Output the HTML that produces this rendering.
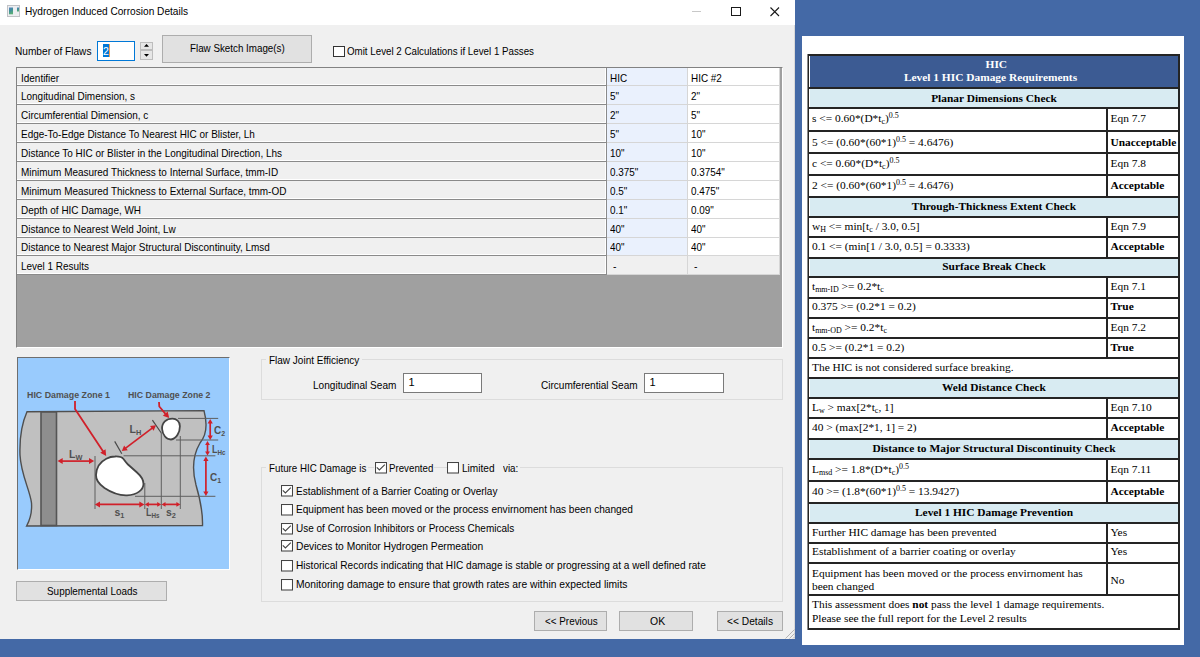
<!DOCTYPE html>
<html><head><meta charset="utf-8"><style>
html,body{margin:0;padding:0;width:1200px;height:657px;overflow:hidden;background:#4469a6;}
div{position:absolute;}
.t{white-space:nowrap;}
sub{font-size:70%;vertical-align:-0.25em;line-height:0}
sup{font-size:70%;vertical-align:0.45em;line-height:0}
</style></head><body>
<div style="left:0px;top:0px;width:795px;height:639px;background:#f0f0f0"></div><div style="left:0px;top:0px;width:795px;height:25px;background:#fff"></div><div style="left:794px;top:25px;width:1px;height:614px;background:#d9d9d9"></div><svg style="position:absolute;left:7px;top:5px" width="13" height="12"><defs><linearGradient id="ig" x1="0" y1="0" x2="0.3" y2="1"><stop offset="0" stop-color="#5b7fc0"/><stop offset="0.5" stop-color="#3f8f9a"/><stop offset="1" stop-color="#5aae78"/></linearGradient></defs><rect x="0.5" y="0.5" width="12" height="11" fill="#eceef0" stroke="#c0c2c6"/><rect x="2" y="2.5" width="4" height="6.8" fill="url(#ig)"/><rect x="10" y="2.5" width="2" height="4" fill="url(#ig)"/></svg><div style="left:692px;top:11px;width:9px;height:1px;background:#c8c8c8"></div><svg style="position:absolute;left:730px;top:6px" width="12" height="12"><rect x="1.5" y="1.5" width="9" height="8" fill="none" stroke="#1a1a1a" stroke-width="1"/></svg><svg style="position:absolute;left:769px;top:6px" width="12" height="12"><path d="M1.5 1.5 L10 10 M10 1.5 L1.5 10" stroke="#1a1a1a" stroke-width="1.1"/></svg><div style="left:802px;top:36px;width:381.8px;height:609px;background:#fff"></div><div style="left:97px;top:41px;width:38px;height:20px;background:#fff;border:1px solid #0078d7;box-sizing:border-box"></div><div style="left:102.5px;top:43.7px;width:6px;height:13px;background:#0078d7"></div><div style="left:108.5px;top:43.7px;width:1px;height:13px;background:#f0a050"></div><div style="left:140px;top:42px;width:13px;height:8px;background:#e6e6e6;border:1px solid #bdbdbd;box-sizing:border-box"></div><div style="left:140px;top:50.2px;width:13px;height:9.6px;background:#e6e6e6;border:1px solid #bdbdbd;box-sizing:border-box"></div><svg style="position:absolute;left:140px;top:42px" width="13" height="18"><path d="M4 4.8 L9 4.8 L6.5 2.1Z M4 12 L9 12 L6.5 14.7Z" fill="#000"/></svg><div style="left:162px;top:35px;width:150px;height:27.5px;background:#e1e1e1;border:1px solid #adadad;box-sizing:border-box"></div><div style="left:333px;top:45.5px;width:12px;height:11.5px;background:#fff;border:1px solid #333;box-sizing:border-box"></div><div style="left:16px;top:67.3px;width:767px;height:280.5px;background:#a0a0a0;border-left:1px solid #828282;border-top:1px solid #828282;border-right:1px solid #fff;border-bottom:1px solid #fff;box-sizing:border-box"></div><div style="left:17px;top:67.6px;width:589.5px;height:18.88px;background:#f0f0f0;border-right:1px solid #8a8a8a;border-bottom:1px solid #8a8a8a;box-sizing:border-box;box-shadow:inset -1px -1px 0 #fff"></div><div style="left:606.5px;top:67.6px;width:81.5px;height:18.88px;background:#eaf1fd;border-right:1px solid #d6d6d6;border-bottom:1px solid #d6d6d6;box-sizing:border-box"></div><div style="left:688px;top:67.6px;width:92px;height:18.88px;background:#fff;border-right:1px solid #d6d6d6;border-bottom:1px solid #d6d6d6;box-sizing:border-box"></div><div style="left:17px;top:86.47999999999999px;width:589.5px;height:18.88px;background:#f0f0f0;border-right:1px solid #8a8a8a;border-bottom:1px solid #8a8a8a;box-sizing:border-box;box-shadow:inset -1px -1px 0 #fff"></div><div style="left:606.5px;top:86.47999999999999px;width:81.5px;height:18.88px;background:#eaf1fd;border-right:1px solid #d6d6d6;border-bottom:1px solid #d6d6d6;box-sizing:border-box"></div><div style="left:688px;top:86.47999999999999px;width:92px;height:18.88px;background:#fff;border-right:1px solid #d6d6d6;border-bottom:1px solid #d6d6d6;box-sizing:border-box"></div><div style="left:17px;top:105.35999999999999px;width:589.5px;height:18.88px;background:#f0f0f0;border-right:1px solid #8a8a8a;border-bottom:1px solid #8a8a8a;box-sizing:border-box;box-shadow:inset -1px -1px 0 #fff"></div><div style="left:606.5px;top:105.35999999999999px;width:81.5px;height:18.88px;background:#eaf1fd;border-right:1px solid #d6d6d6;border-bottom:1px solid #d6d6d6;box-sizing:border-box"></div><div style="left:688px;top:105.35999999999999px;width:92px;height:18.88px;background:#fff;border-right:1px solid #d6d6d6;border-bottom:1px solid #d6d6d6;box-sizing:border-box"></div><div style="left:17px;top:124.24px;width:589.5px;height:18.88px;background:#f0f0f0;border-right:1px solid #8a8a8a;border-bottom:1px solid #8a8a8a;box-sizing:border-box;box-shadow:inset -1px -1px 0 #fff"></div><div style="left:606.5px;top:124.24px;width:81.5px;height:18.88px;background:#eaf1fd;border-right:1px solid #d6d6d6;border-bottom:1px solid #d6d6d6;box-sizing:border-box"></div><div style="left:688px;top:124.24px;width:92px;height:18.88px;background:#fff;border-right:1px solid #d6d6d6;border-bottom:1px solid #d6d6d6;box-sizing:border-box"></div><div style="left:17px;top:143.12px;width:589.5px;height:18.88px;background:#f0f0f0;border-right:1px solid #8a8a8a;border-bottom:1px solid #8a8a8a;box-sizing:border-box;box-shadow:inset -1px -1px 0 #fff"></div><div style="left:606.5px;top:143.12px;width:81.5px;height:18.88px;background:#eaf1fd;border-right:1px solid #d6d6d6;border-bottom:1px solid #d6d6d6;box-sizing:border-box"></div><div style="left:688px;top:143.12px;width:92px;height:18.88px;background:#fff;border-right:1px solid #d6d6d6;border-bottom:1px solid #d6d6d6;box-sizing:border-box"></div><div style="left:17px;top:162.0px;width:589.5px;height:18.88px;background:#f0f0f0;border-right:1px solid #8a8a8a;border-bottom:1px solid #8a8a8a;box-sizing:border-box;box-shadow:inset -1px -1px 0 #fff"></div><div style="left:606.5px;top:162.0px;width:81.5px;height:18.88px;background:#eaf1fd;border-right:1px solid #d6d6d6;border-bottom:1px solid #d6d6d6;box-sizing:border-box"></div><div style="left:688px;top:162.0px;width:92px;height:18.88px;background:#fff;border-right:1px solid #d6d6d6;border-bottom:1px solid #d6d6d6;box-sizing:border-box"></div><div style="left:17px;top:180.88px;width:589.5px;height:18.88px;background:#f0f0f0;border-right:1px solid #8a8a8a;border-bottom:1px solid #8a8a8a;box-sizing:border-box;box-shadow:inset -1px -1px 0 #fff"></div><div style="left:606.5px;top:180.88px;width:81.5px;height:18.88px;background:#eaf1fd;border-right:1px solid #d6d6d6;border-bottom:1px solid #d6d6d6;box-sizing:border-box"></div><div style="left:688px;top:180.88px;width:92px;height:18.88px;background:#fff;border-right:1px solid #d6d6d6;border-bottom:1px solid #d6d6d6;box-sizing:border-box"></div><div style="left:17px;top:199.76px;width:589.5px;height:18.88px;background:#f0f0f0;border-right:1px solid #8a8a8a;border-bottom:1px solid #8a8a8a;box-sizing:border-box;box-shadow:inset -1px -1px 0 #fff"></div><div style="left:606.5px;top:199.76px;width:81.5px;height:18.88px;background:#eaf1fd;border-right:1px solid #d6d6d6;border-bottom:1px solid #d6d6d6;box-sizing:border-box"></div><div style="left:688px;top:199.76px;width:92px;height:18.88px;background:#fff;border-right:1px solid #d6d6d6;border-bottom:1px solid #d6d6d6;box-sizing:border-box"></div><div style="left:17px;top:218.64px;width:589.5px;height:18.88px;background:#f0f0f0;border-right:1px solid #8a8a8a;border-bottom:1px solid #8a8a8a;box-sizing:border-box;box-shadow:inset -1px -1px 0 #fff"></div><div style="left:606.5px;top:218.64px;width:81.5px;height:18.88px;background:#eaf1fd;border-right:1px solid #d6d6d6;border-bottom:1px solid #d6d6d6;box-sizing:border-box"></div><div style="left:688px;top:218.64px;width:92px;height:18.88px;background:#fff;border-right:1px solid #d6d6d6;border-bottom:1px solid #d6d6d6;box-sizing:border-box"></div><div style="left:17px;top:237.51999999999998px;width:589.5px;height:18.88px;background:#f0f0f0;border-right:1px solid #8a8a8a;border-bottom:1px solid #8a8a8a;box-sizing:border-box;box-shadow:inset -1px -1px 0 #fff"></div><div style="left:606.5px;top:237.51999999999998px;width:81.5px;height:18.88px;background:#eaf1fd;border-right:1px solid #d6d6d6;border-bottom:1px solid #d6d6d6;box-sizing:border-box"></div><div style="left:688px;top:237.51999999999998px;width:92px;height:18.88px;background:#fff;border-right:1px solid #d6d6d6;border-bottom:1px solid #d6d6d6;box-sizing:border-box"></div><div style="left:17px;top:256.4px;width:589.5px;height:18.88px;background:#f0f0f0;border-right:1px solid #8a8a8a;border-bottom:1px solid #8a8a8a;box-sizing:border-box;box-shadow:inset -1px -1px 0 #fff"></div><div style="left:606.5px;top:256.4px;width:81.5px;height:18.88px;background:#f0f0f0;border-right:1px solid #d6d6d6;border-bottom:1px solid #d6d6d6;box-sizing:border-box"></div><div style="left:688px;top:256.4px;width:92px;height:18.88px;background:#f0f0f0;border-right:1px solid #d6d6d6;border-bottom:1px solid #d6d6d6;box-sizing:border-box"></div><div style="left:16.5px;top:356.5px;width:213.3px;height:213.5px;background:#99cbfd;border-left:1px solid #6e6e6e;border-top:1px solid #6e6e6e;border-right:1px solid #fff;border-bottom:1px solid #fff;box-sizing:border-box"></div><svg style="position:absolute;left:0;top:0" width="240" height="580" viewBox="0 0 240 580">
<path d="M27 411.8 L204 410.6 C207.5 424 206 436 200 443 C193 455 192 470 196 485 C199.5 497 203 510 202.5 525.5 L26.6 526 C31 518 32 510 31.5 503 C30 490 21 475 20 455 C19.5 440 22 423 27 411.8Z" fill="#c0c0c0" stroke="#4f4f4f" stroke-width="1.4"/>
<rect x="41" y="412" width="15.5" height="113.5" fill="#8e8e8e" stroke="#555" stroke-width="1.6"/>
<g stroke="#5f5f5f" stroke-width="1" fill="none">
<path d="M123.5 455.8 H215.4 M135 496.3 H215.4 M178 418.4 H218.2 M176 440 H218.2"/>
<path d="M95 456 V509 M144.8 483 V509 M161.3 433 V509 M180.3 436 V509"/>
<path d="M114.7 441.4 L121.8 453.7 M152.4 420.2 L161.3 433" stroke="#4a4a4a" stroke-width="1.2"/>
</g>
<path d="M115 456.5 C119 456.3 121.8 457 123.5 459 C124.8 460.8 126 462.5 128 464.5 L137 472.5 C141.3 476.3 143.6 480 143.5 484 C143.3 489.8 137.5 494.8 127 495.3 C118 495.6 110.5 492 104.5 488 C98.8 484 95.8 479.8 96 475 C96.3 467.5 100.5 461.7 106.3 458.7 C109.2 457.2 112 456.5 115 456.5Z" fill="#fff" stroke="#444" stroke-width="1.8"/>
<path d="M172.5 418.7 C176.3 418.7 179.9 421.2 179.9 426.2 C179.9 432 176.6 439 171 439.5 C166.3 439.6 162.6 435 162.1 429 C161.7 422.5 166.3 418.7 172.5 418.7Z" fill="#fff" stroke="#444" stroke-width="1.8"/>
<path d="M75 401 L75 409 L103.5 452" stroke="#d0202a" stroke-width="1.8" fill="none"/>
<path d="M106.20 456.00 L100.22 452.77 L105.55 449.23Z" fill="#d0202a"/>
<path d="M159 402 L159.3 406.5 L165.5 413.8" stroke="#d0202a" stroke-width="1.8" fill="none"/>
<path d="M169.20 418.10 L162.85 415.67 L167.68 411.47Z" fill="#d0202a"/>
<path d="M60.62 461.10 L91.08 461.10" stroke="#d0202a" stroke-width="1.7" fill="none"/><path d="M94.20 461.10 L89.00 464.10 L89.00 458.10Z" fill="#d0202a"/><path d="M57.50 461.10 L62.70 464.10 L62.70 458.10Z" fill="#d0202a"/>
<path d="M124.29 449.12 L153.51 427.08" stroke="#d0202a" stroke-width="1.7" fill="none"/><path d="M156.00 425.20 L153.66 430.73 L150.04 425.94Z" fill="#d0202a"/><path d="M121.80 451.00 L127.76 450.26 L124.14 445.47Z" fill="#d0202a"/>
<path d="M97.92 504.40 L141.38 504.40" stroke="#d0202a" stroke-width="1.7" fill="none"/><path d="M144.50 504.40 L139.30 507.40 L139.30 501.40Z" fill="#d0202a"/><path d="M94.80 504.40 L100.00 507.40 L100.00 501.40Z" fill="#d0202a"/>
<path d="M147.20 504.40 L158.80 504.40" stroke="#d0202a" stroke-width="1.7" fill="none"/><path d="M161.20 504.40 L157.20 506.80 L157.20 502.00Z" fill="#d0202a"/><path d="M144.80 504.40 L148.80 506.80 L148.80 502.00Z" fill="#d0202a"/>
<path d="M163.90 504.40 L178.00 504.40" stroke="#d0202a" stroke-width="1.7" fill="none"/><path d="M180.40 504.40 L176.40 506.80 L176.40 502.00Z" fill="#d0202a"/><path d="M161.50 504.40 L165.50 506.80 L165.50 502.00Z" fill="#d0202a"/>
<path d="M210.20 421.70 L210.20 437.30" stroke="#d0202a" stroke-width="1.7" fill="none"/><path d="M210.20 440.00 L207.60 435.50 L212.80 435.50Z" fill="#d0202a"/><path d="M210.20 419.00 L207.60 423.50 L212.80 423.50Z" fill="#d0202a"/>
<path d="M207.50 443.40 L207.50 453.10" stroke="#d0202a" stroke-width="1.7" fill="none"/><path d="M207.50 455.50 L205.10 451.50 L209.90 451.50Z" fill="#d0202a"/><path d="M207.50 441.00 L205.10 445.00 L209.90 445.00Z" fill="#d0202a"/>
<path d="M205.90 459.20 L205.90 493.30" stroke="#d0202a" stroke-width="1.7" fill="none"/><path d="M205.90 496.00 L203.30 491.50 L208.50 491.50Z" fill="#d0202a"/><path d="M205.90 456.50 L203.30 461.00 L208.50 461.00Z" fill="#d0202a"/>
</svg><div style="left:16.4px;top:581px;width:151px;height:19.7px;background:#e1e1e1;border:1px solid #adadad;box-sizing:border-box"></div><div style="left:261.4px;top:359.3px;width:522px;height:40.3px;border:1px solid #dcdcdc;box-sizing:border-box"></div><div style="left:266px;top:354px;width:96px;height:10px;background:#f0f0f0"></div><div style="left:403px;top:373.3px;width:79.3px;height:19.4px;background:#fff;border:1px solid #7a7a7a;box-sizing:border-box"></div><div style="left:644.3px;top:373.3px;width:79.3px;height:19.4px;background:#fff;border:1px solid #7a7a7a;box-sizing:border-box"></div><div style="left:261.4px;top:467.3px;width:522px;height:135.2px;border:1px solid #dcdcdc;box-sizing:border-box"></div><div style="left:266px;top:460px;width:101.5px;height:12px;background:#f0f0f0"></div><div style="left:373.8px;top:460px;width:60.5px;height:12px;background:#f0f0f0"></div><div style="left:446.5px;top:460px;width:56px;height:12px;background:#f0f0f0"></div><div style="left:501.5px;top:460px;width:18px;height:12px;background:#f0f0f0"></div><svg style="position:absolute;left:374.5px;top:462px" width="12" height="12"><rect x="0.5" y="0.5" width="11" height="10.5" fill="#fff" stroke="#444" stroke-width="1.05"/><path d="M1.8 5.3 L4.4 8 L9.8 2.6" stroke="#444" stroke-width="1.1" fill="none"/></svg><svg style="position:absolute;left:447px;top:462px" width="12" height="12"><rect x="0.5" y="0.5" width="11" height="10.5" fill="#fff" stroke="#444" stroke-width="1.05"/></svg><svg style="position:absolute;left:281px;top:485.2px" width="12" height="12"><rect x="0.5" y="0.5" width="11" height="10.5" fill="#fff" stroke="#444" stroke-width="1.05"/><path d="M1.8 5.3 L4.4 8 L9.8 2.6" stroke="#444" stroke-width="1.1" fill="none"/></svg><svg style="position:absolute;left:281px;top:503.7px" width="12" height="12"><rect x="0.5" y="0.5" width="11" height="10.5" fill="#fff" stroke="#444" stroke-width="1.05"/></svg><svg style="position:absolute;left:281px;top:523.0px" width="12" height="12"><rect x="0.5" y="0.5" width="11" height="10.5" fill="#fff" stroke="#444" stroke-width="1.05"/><path d="M1.8 5.3 L4.4 8 L9.8 2.6" stroke="#444" stroke-width="1.1" fill="none"/></svg><svg style="position:absolute;left:281px;top:540.2px" width="12" height="12"><rect x="0.5" y="0.5" width="11" height="10.5" fill="#fff" stroke="#444" stroke-width="1.05"/><path d="M1.8 5.3 L4.4 8 L9.8 2.6" stroke="#444" stroke-width="1.1" fill="none"/></svg><svg style="position:absolute;left:281px;top:559.7px" width="12" height="12"><rect x="0.5" y="0.5" width="11" height="10.5" fill="#fff" stroke="#444" stroke-width="1.05"/></svg><svg style="position:absolute;left:281px;top:578.7px" width="12" height="12"><rect x="0.5" y="0.5" width="11" height="10.5" fill="#fff" stroke="#444" stroke-width="1.05"/></svg><div style="left:534px;top:611.2px;width:72.7px;height:19.4px;background:#e1e1e1;border:1px solid #adadad;box-sizing:border-box"></div><div style="left:619px;top:611.2px;width:73.6px;height:19.4px;background:#e1e1e1;border:1px solid #adadad;box-sizing:border-box"></div><div style="left:717px;top:611.2px;width:65.6px;height:19.4px;background:#e1e1e1;border:1px solid #adadad;box-sizing:border-box"></div><svg style="position:absolute;left:782px;top:626px" width="13" height="13"><path d="M12.5 3.5 L3.5 12.5 M12.5 7.5 L7.5 12.5 M12.5 11 L11 12.5" stroke="#b4b4b4" stroke-width="1"/></svg><div style="left:810px;top:56px;width:368px;height:31px;background:#3c5b93"></div><div style="left:810px;top:89px;width:368px;height:17.5px;background:#d8ebf2"></div><div style="left:810px;top:108.5px;width:368px;height:21.5px;background:#fff"></div><div style="left:810px;top:132px;width:368px;height:19.5px;background:#fff"></div><div style="left:810px;top:153.5px;width:368px;height:20.0px;background:#fff"></div><div style="left:810px;top:175.5px;width:368px;height:20.5px;background:#fff"></div><div style="left:810px;top:198px;width:368px;height:18px;background:#d8ebf2"></div><div style="left:810px;top:218px;width:368px;height:18.30000000000001px;background:#fff"></div><div style="left:810px;top:238.3px;width:368px;height:18.30000000000001px;background:#fff"></div><div style="left:810px;top:258.6px;width:368px;height:17.399999999999977px;background:#d8ebf2"></div><div style="left:810px;top:278px;width:368px;height:18.600000000000023px;background:#fff"></div><div style="left:810px;top:298.6px;width:368px;height:18.19999999999999px;background:#fff"></div><div style="left:810px;top:318.8px;width:368px;height:18.0px;background:#fff"></div><div style="left:810px;top:338.8px;width:368px;height:18.599999999999966px;background:#fff"></div><div style="left:810px;top:359.4px;width:368px;height:17.80000000000001px;background:#fff"></div><div style="left:810px;top:379.2px;width:368px;height:17.80000000000001px;background:#d8ebf2"></div><div style="left:810px;top:399px;width:368px;height:18.19999999999999px;background:#fff"></div><div style="left:810px;top:419.2px;width:368px;height:18.600000000000023px;background:#fff"></div><div style="left:810px;top:439.8px;width:368px;height:18.0px;background:#d8ebf2"></div><div style="left:810px;top:459.8px;width:368px;height:20.0px;background:#fff"></div><div style="left:810px;top:481.8px;width:368px;height:20.399999999999977px;background:#fff"></div><div style="left:810px;top:504.2px;width:368px;height:17.69999999999999px;background:#d8ebf2"></div><div style="left:810px;top:523.9px;width:368px;height:17.700000000000045px;background:#fff"></div><div style="left:810px;top:543.6px;width:368px;height:18.399999999999977px;background:#fff"></div><div style="left:810px;top:564px;width:368px;height:30.200000000000045px;background:#fff"></div><div style="left:810px;top:596.2px;width:368px;height:31.399999999999977px;background:#fff"></div><div style="left:808px;top:54px;width:372px;height:2px;background:#242424"></div><div style="left:808px;top:87px;width:372px;height:2px;background:#242424"></div><div style="left:808px;top:106.5px;width:372px;height:2px;background:#242424"></div><div style="left:808px;top:130px;width:372px;height:2px;background:#242424"></div><div style="left:808px;top:151.5px;width:372px;height:2px;background:#242424"></div><div style="left:808px;top:173.5px;width:372px;height:2px;background:#242424"></div><div style="left:808px;top:196px;width:372px;height:2px;background:#242424"></div><div style="left:808px;top:216px;width:372px;height:2px;background:#242424"></div><div style="left:808px;top:236.3px;width:372px;height:2px;background:#242424"></div><div style="left:808px;top:256.6px;width:372px;height:2px;background:#242424"></div><div style="left:808px;top:276px;width:372px;height:2px;background:#242424"></div><div style="left:808px;top:296.6px;width:372px;height:2px;background:#242424"></div><div style="left:808px;top:316.8px;width:372px;height:2px;background:#242424"></div><div style="left:808px;top:336.8px;width:372px;height:2px;background:#242424"></div><div style="left:808px;top:357.4px;width:372px;height:2px;background:#242424"></div><div style="left:808px;top:377.2px;width:372px;height:2px;background:#242424"></div><div style="left:808px;top:397px;width:372px;height:2px;background:#242424"></div><div style="left:808px;top:417.2px;width:372px;height:2px;background:#242424"></div><div style="left:808px;top:437.8px;width:372px;height:2px;background:#242424"></div><div style="left:808px;top:457.8px;width:372px;height:2px;background:#242424"></div><div style="left:808px;top:479.8px;width:372px;height:2px;background:#242424"></div><div style="left:808px;top:502.2px;width:372px;height:2px;background:#242424"></div><div style="left:808px;top:521.9px;width:372px;height:2px;background:#242424"></div><div style="left:808px;top:541.6px;width:372px;height:2px;background:#242424"></div><div style="left:808px;top:562px;width:372px;height:2px;background:#242424"></div><div style="left:808px;top:594.2px;width:372px;height:2px;background:#242424"></div><div style="left:808px;top:627.6px;width:372px;height:2px;background:#242424"></div><div style="left:807px;top:54px;width:1px;height:575.6px;background:#8a8a8a"></div><div style="left:808px;top:54px;width:1px;height:575.6px;background:#242424"></div><div style="left:1178px;top:54px;width:2px;height:575.6px;background:#242424"></div><div style="left:1106px;top:108.5px;width:2px;height:21.5px;background:#242424"></div><div style="left:1106px;top:132px;width:2px;height:19.5px;background:#242424"></div><div style="left:1106px;top:153.5px;width:2px;height:20.0px;background:#242424"></div><div style="left:1106px;top:175.5px;width:2px;height:20.5px;background:#242424"></div><div style="left:1106px;top:218px;width:2px;height:18.30000000000001px;background:#242424"></div><div style="left:1106px;top:238.3px;width:2px;height:18.30000000000001px;background:#242424"></div><div style="left:1106px;top:278px;width:2px;height:18.600000000000023px;background:#242424"></div><div style="left:1106px;top:298.6px;width:2px;height:18.19999999999999px;background:#242424"></div><div style="left:1106px;top:318.8px;width:2px;height:18.0px;background:#242424"></div><div style="left:1106px;top:338.8px;width:2px;height:18.599999999999966px;background:#242424"></div><div style="left:1106px;top:399px;width:2px;height:18.19999999999999px;background:#242424"></div><div style="left:1106px;top:419.2px;width:2px;height:18.600000000000023px;background:#242424"></div><div style="left:1106px;top:459.8px;width:2px;height:20.0px;background:#242424"></div><div style="left:1106px;top:481.8px;width:2px;height:20.399999999999977px;background:#242424"></div><div style="left:1106px;top:523.9px;width:2px;height:17.700000000000045px;background:#242424"></div><div style="left:1106px;top:543.6px;width:2px;height:18.399999999999977px;background:#242424"></div><div style="left:1106px;top:564px;width:2px;height:30.200000000000045px;background:#242424"></div>
<div class="t" style="left:25.00px;top:5.00px;font-family:'Liberation Sans',sans-serif;font-size:11px;line-height:12px;color:#000;transform:scaleX(0.9192);transform-origin:0 0;">Hydrogen Induced Corrosion Details</div><div class="t" style="left:15.00px;top:44.50px;font-family:'Liberation Sans',sans-serif;font-size:11px;line-height:12px;color:#000;transform:scaleX(0.9201);transform-origin:0 0;">Number of Flaws</div><div class="t" style="left:103.00px;top:45.00px;font-family:'Liberation Sans',sans-serif;font-size:11px;line-height:12px;color:#fff;transform:scaleX(0.9500);transform-origin:0 0;">2</div><div class="t" style="left:189.80px;top:41.70px;font-family:'Liberation Sans',sans-serif;font-size:11px;line-height:12px;color:#000;transform:scaleX(0.8902);transform-origin:0 0;">Flaw Sketch Image(s)</div><div class="t" style="left:347.00px;top:45.00px;font-family:'Liberation Sans',sans-serif;font-size:11px;line-height:12px;color:#000;transform:scaleX(0.8865);transform-origin:0 0;">Omit Level 2 Calculations if Level 1 Passes</div><div class="t" style="left:21.00px;top:71.50px;font-family:'Liberation Sans',sans-serif;font-size:11px;line-height:12px;color:#000;transform:scaleX(0.9050);transform-origin:0 0;">Identifier</div><div class="t" style="left:610.00px;top:71.50px;font-family:'Liberation Sans',sans-serif;font-size:11px;line-height:12px;color:#000;transform:scaleX(0.9000);transform-origin:0 0;">HIC</div><div class="t" style="left:691.00px;top:71.50px;font-family:'Liberation Sans',sans-serif;font-size:11px;line-height:12px;color:#000;transform:scaleX(0.9000);transform-origin:0 0;">HIC #2</div><div class="t" style="left:21.00px;top:90.38px;font-family:'Liberation Sans',sans-serif;font-size:11px;line-height:12px;color:#000;transform:scaleX(0.9050);transform-origin:0 0;">Longitudinal Dimension, s</div><div class="t" style="left:610.00px;top:90.38px;font-family:'Liberation Sans',sans-serif;font-size:11px;line-height:12px;color:#000;transform:scaleX(0.9000);transform-origin:0 0;">5&quot;</div><div class="t" style="left:691.00px;top:90.38px;font-family:'Liberation Sans',sans-serif;font-size:11px;line-height:12px;color:#000;transform:scaleX(0.9000);transform-origin:0 0;">2&quot;</div><div class="t" style="left:21.00px;top:109.26px;font-family:'Liberation Sans',sans-serif;font-size:11px;line-height:12px;color:#000;transform:scaleX(0.9050);transform-origin:0 0;">Circumferential Dimension, c</div><div class="t" style="left:610.00px;top:109.26px;font-family:'Liberation Sans',sans-serif;font-size:11px;line-height:12px;color:#000;transform:scaleX(0.9000);transform-origin:0 0;">2&quot;</div><div class="t" style="left:691.00px;top:109.26px;font-family:'Liberation Sans',sans-serif;font-size:11px;line-height:12px;color:#000;transform:scaleX(0.9000);transform-origin:0 0;">5&quot;</div><div class="t" style="left:21.00px;top:128.14px;font-family:'Liberation Sans',sans-serif;font-size:11px;line-height:12px;color:#000;transform:scaleX(0.9050);transform-origin:0 0;">Edge-To-Edge Distance To Nearest HIC or Blister, Lh</div><div class="t" style="left:610.00px;top:128.14px;font-family:'Liberation Sans',sans-serif;font-size:11px;line-height:12px;color:#000;transform:scaleX(0.9000);transform-origin:0 0;">5&quot;</div><div class="t" style="left:691.00px;top:128.14px;font-family:'Liberation Sans',sans-serif;font-size:11px;line-height:12px;color:#000;transform:scaleX(0.9000);transform-origin:0 0;">10&quot;</div><div class="t" style="left:21.00px;top:147.02px;font-family:'Liberation Sans',sans-serif;font-size:11px;line-height:12px;color:#000;transform:scaleX(0.9050);transform-origin:0 0;">Distance To HIC or Blister in the Longitudinal Direction, Lhs</div><div class="t" style="left:610.00px;top:147.02px;font-family:'Liberation Sans',sans-serif;font-size:11px;line-height:12px;color:#000;transform:scaleX(0.9000);transform-origin:0 0;">10&quot;</div><div class="t" style="left:691.00px;top:147.02px;font-family:'Liberation Sans',sans-serif;font-size:11px;line-height:12px;color:#000;transform:scaleX(0.9000);transform-origin:0 0;">10&quot;</div><div class="t" style="left:21.00px;top:165.90px;font-family:'Liberation Sans',sans-serif;font-size:11px;line-height:12px;color:#000;transform:scaleX(0.9050);transform-origin:0 0;">Minimum Measured Thickness to Internal Surface, tmm-ID</div><div class="t" style="left:610.00px;top:165.90px;font-family:'Liberation Sans',sans-serif;font-size:11px;line-height:12px;color:#000;transform:scaleX(0.9000);transform-origin:0 0;">0.375&quot;</div><div class="t" style="left:691.00px;top:165.90px;font-family:'Liberation Sans',sans-serif;font-size:11px;line-height:12px;color:#000;transform:scaleX(0.9000);transform-origin:0 0;">0.3754&quot;</div><div class="t" style="left:21.00px;top:184.78px;font-family:'Liberation Sans',sans-serif;font-size:11px;line-height:12px;color:#000;transform:scaleX(0.9050);transform-origin:0 0;">Minimum Measured Thickness to External Surface, tmm-OD</div><div class="t" style="left:610.00px;top:184.78px;font-family:'Liberation Sans',sans-serif;font-size:11px;line-height:12px;color:#000;transform:scaleX(0.9000);transform-origin:0 0;">0.5&quot;</div><div class="t" style="left:691.00px;top:184.78px;font-family:'Liberation Sans',sans-serif;font-size:11px;line-height:12px;color:#000;transform:scaleX(0.9000);transform-origin:0 0;">0.475&quot;</div><div class="t" style="left:21.00px;top:203.66px;font-family:'Liberation Sans',sans-serif;font-size:11px;line-height:12px;color:#000;transform:scaleX(0.9050);transform-origin:0 0;">Depth of HIC Damage, WH</div><div class="t" style="left:610.00px;top:203.66px;font-family:'Liberation Sans',sans-serif;font-size:11px;line-height:12px;color:#000;transform:scaleX(0.9000);transform-origin:0 0;">0.1&quot;</div><div class="t" style="left:691.00px;top:203.66px;font-family:'Liberation Sans',sans-serif;font-size:11px;line-height:12px;color:#000;transform:scaleX(0.9000);transform-origin:0 0;">0.09&quot;</div><div class="t" style="left:21.00px;top:222.54px;font-family:'Liberation Sans',sans-serif;font-size:11px;line-height:12px;color:#000;transform:scaleX(0.9050);transform-origin:0 0;">Distance to Nearest Weld Joint, Lw</div><div class="t" style="left:610.00px;top:222.54px;font-family:'Liberation Sans',sans-serif;font-size:11px;line-height:12px;color:#000;transform:scaleX(0.9000);transform-origin:0 0;">40&quot;</div><div class="t" style="left:691.00px;top:222.54px;font-family:'Liberation Sans',sans-serif;font-size:11px;line-height:12px;color:#000;transform:scaleX(0.9000);transform-origin:0 0;">40&quot;</div><div class="t" style="left:21.00px;top:241.42px;font-family:'Liberation Sans',sans-serif;font-size:11px;line-height:12px;color:#000;transform:scaleX(0.9050);transform-origin:0 0;">Distance to Nearest Major Structural Discontinuity, Lmsd</div><div class="t" style="left:610.00px;top:241.42px;font-family:'Liberation Sans',sans-serif;font-size:11px;line-height:12px;color:#000;transform:scaleX(0.9000);transform-origin:0 0;">40&quot;</div><div class="t" style="left:691.00px;top:241.42px;font-family:'Liberation Sans',sans-serif;font-size:11px;line-height:12px;color:#000;transform:scaleX(0.9000);transform-origin:0 0;">40&quot;</div><div class="t" style="left:21.00px;top:260.30px;font-family:'Liberation Sans',sans-serif;font-size:11px;line-height:12px;color:#000;transform:scaleX(0.9050);transform-origin:0 0;">Level 1 Results</div><div class="t" style="left:613.00px;top:260.30px;font-family:'Liberation Sans',sans-serif;font-size:11px;line-height:12px;color:#000;transform:scaleX(0.9500);transform-origin:0 0;">-</div><div class="t" style="left:694.00px;top:260.30px;font-family:'Liberation Sans',sans-serif;font-size:11px;line-height:12px;color:#000;transform:scaleX(0.9500);transform-origin:0 0;">-</div><div class="t" style="left:26.60px;top:390.00px;font-family:'Liberation Sans',sans-serif;font-size:9px;line-height:10px;color:#505050;font-weight:bold;transform:scaleX(0.9819);transform-origin:0 0;">HIC Damage Zone 1</div><div class="t" style="left:128.20px;top:390.00px;font-family:'Liberation Sans',sans-serif;font-size:9px;line-height:10px;color:#505050;font-weight:bold;transform:scaleX(0.9760);transform-origin:0 0;">HIC Damage Zone 2</div><div class="t" style="left:69.00px;top:448.50px;font-family:'Liberation Sans',sans-serif;font-size:10.5px;line-height:10px;color:#505050;font-weight:bold;">L<sub>W</sub></div><div class="t" style="left:129.60px;top:424.20px;font-family:'Liberation Sans',sans-serif;font-size:10.5px;line-height:10px;color:#505050;font-weight:bold;">L<sub>H</sub></div><div class="t" style="left:213.90px;top:424.90px;font-family:'Liberation Sans',sans-serif;font-size:10.5px;line-height:10px;color:#505050;font-weight:bold;transform:scaleX(0.9500);transform-origin:0 0;">C<sub>2</sub></div><div class="t" style="left:212.30px;top:443.50px;font-family:'Liberation Sans',sans-serif;font-size:10.5px;line-height:10px;color:#505050;font-weight:bold;transform:scaleX(0.8500);transform-origin:0 0;">L<sub>Hc</sub></div><div class="t" style="left:210.10px;top:472.40px;font-family:'Liberation Sans',sans-serif;font-size:10.5px;line-height:10px;color:#505050;font-weight:bold;transform:scaleX(0.9500);transform-origin:0 0;">C<sub>1</sub></div><div class="t" style="left:114.50px;top:507.20px;font-family:'Liberation Sans',sans-serif;font-size:10.5px;line-height:10px;color:#505050;font-weight:bold;">s<sub>1</sub></div><div class="t" style="left:145.50px;top:507.20px;font-family:'Liberation Sans',sans-serif;font-size:10.5px;line-height:10px;color:#505050;font-weight:bold;transform:scaleX(0.8500);transform-origin:0 0;">L<sub>Hs</sub></div><div class="t" style="left:166.00px;top:507.20px;font-family:'Liberation Sans',sans-serif;font-size:10.5px;line-height:10px;color:#505050;font-weight:bold;">s<sub>2</sub></div><div class="t" style="left:46.80px;top:584.80px;font-family:'Liberation Sans',sans-serif;font-size:11px;line-height:12px;color:#000;transform:scaleX(0.9013);transform-origin:0 0;">Supplemental Loads</div><div class="t" style="left:268.70px;top:353.80px;font-family:'Liberation Sans',sans-serif;font-size:11px;line-height:12px;color:#000;transform:scaleX(0.9080);transform-origin:0 0;">Flaw Joint Efficiency</div><div class="t" style="left:312.60px;top:378.60px;font-family:'Liberation Sans',sans-serif;font-size:11px;line-height:12px;color:#000;transform:scaleX(0.9152);transform-origin:0 0;">Longitudinal Seam</div><div class="t" style="left:408.50px;top:376.30px;font-family:'Liberation Sans',sans-serif;font-size:11px;line-height:12px;color:#000;">1</div><div class="t" style="left:540.70px;top:378.60px;font-family:'Liberation Sans',sans-serif;font-size:11px;line-height:12px;color:#000;transform:scaleX(0.9133);transform-origin:0 0;">Circumferential Seam</div><div class="t" style="left:649.50px;top:376.30px;font-family:'Liberation Sans',sans-serif;font-size:11px;line-height:12px;color:#000;">1</div><div class="t" style="left:268.70px;top:461.50px;font-family:'Liberation Sans',sans-serif;font-size:11px;line-height:12px;color:#000;transform:scaleX(0.8891);transform-origin:0 0;">Future HIC Damage is</div><div class="t" style="left:388.70px;top:461.50px;font-family:'Liberation Sans',sans-serif;font-size:11px;line-height:12px;color:#000;transform:scaleX(0.8832);transform-origin:0 0;">Prevented</div><div class="t" style="left:461.70px;top:461.50px;font-family:'Liberation Sans',sans-serif;font-size:11px;line-height:12px;color:#000;transform:scaleX(0.9191);transform-origin:0 0;">Limited</div><div class="t" style="left:502.70px;top:461.50px;font-family:'Liberation Sans',sans-serif;font-size:11px;line-height:12px;color:#000;transform:scaleX(0.8934);transform-origin:0 0;">via:</div><div class="t" style="left:295.60px;top:484.50px;font-family:'Liberation Sans',sans-serif;font-size:11px;line-height:12px;color:#000;transform:scaleX(0.9100);transform-origin:0 0;">Establishment of a Barrier Coating or Overlay</div><div class="t" style="left:295.60px;top:503.00px;font-family:'Liberation Sans',sans-serif;font-size:11px;line-height:12px;color:#000;transform:scaleX(0.9182);transform-origin:0 0;">Equipment has been moved or the process envirnoment has been changed</div><div class="t" style="left:295.60px;top:522.30px;font-family:'Liberation Sans',sans-serif;font-size:11px;line-height:12px;color:#000;transform:scaleX(0.9082);transform-origin:0 0;">Use of Corrosion Inhibitors or Process Chemicals</div><div class="t" style="left:295.60px;top:539.50px;font-family:'Liberation Sans',sans-serif;font-size:11px;line-height:12px;color:#000;transform:scaleX(0.9306);transform-origin:0 0;">Devices to Monitor Hydrogen Permeation</div><div class="t" style="left:295.60px;top:559.00px;font-family:'Liberation Sans',sans-serif;font-size:11px;line-height:12px;color:#000;transform:scaleX(0.9181);transform-origin:0 0;">Historical Records indicating that HIC damage is stable or progressing at a well defined rate</div><div class="t" style="left:295.60px;top:578.00px;font-family:'Liberation Sans',sans-serif;font-size:11px;line-height:12px;color:#000;transform:scaleX(0.9361);transform-origin:0 0;">Monitoring damage to ensure that growth rates are within expected limits</div><div class="t" style="left:544.80px;top:615.00px;font-family:'Liberation Sans',sans-serif;font-size:11px;line-height:12px;color:#000;transform:scaleX(0.8977);transform-origin:0 0;">&lt;&lt; Previous</div><div class="t" style="left:650.00px;top:615.00px;font-family:'Liberation Sans',sans-serif;font-size:11px;line-height:12px;color:#000;transform:scaleX(0.9500);transform-origin:0 0;">OK</div><div class="t" style="left:727.00px;top:615.00px;font-family:'Liberation Sans',sans-serif;font-size:11px;line-height:12px;color:#000;transform:scaleX(0.9287);transform-origin:0 0;">&lt;&lt; Details</div><div class="t" style="left:996.30px;top:58.30px;font-family:'Liberation Serif',serif;font-size:11.4px;line-height:12px;color:#fff;font-weight:bold;transform:translateX(-50%) scaleX(1.0000);transform-origin:50% 0;">HIC</div><div class="t" style="left:990.50px;top:71.20px;font-family:'Liberation Serif',serif;font-size:11.4px;line-height:12px;color:#fff;font-weight:bold;transform:translateX(-50%) scaleX(1.0000);transform-origin:50% 0;">Level 1 HIC Damage Requirements</div><div class="t" style="left:994.00px;top:92.20px;font-family:'Liberation Serif',serif;font-size:11.4px;line-height:12px;color:#000;font-weight:bold;transform:translateX(-50%) scaleX(1.0000);transform-origin:50% 0;">Planar Dimensions Check</div><div class="t" style="left:812.00px;top:112.00px;font-family:'Liberation Serif',serif;font-size:11.4px;line-height:12px;color:#000;">s &lt;= 0.60*(D*t<sub>c</sub>)<sup>0.5</sup></div><div class="t" style="left:1110.50px;top:112.00px;font-family:'Liberation Serif',serif;font-size:11.4px;line-height:12px;color:#000;">Eqn 7.7</div><div class="t" style="left:812.00px;top:135.50px;font-family:'Liberation Serif',serif;font-size:11.4px;line-height:12px;color:#000;">5 &lt;= (0.60*(60*1)<sup>0.5</sup> = 4.6476)</div><div class="t" style="left:1110.50px;top:135.50px;font-family:'Liberation Serif',serif;font-size:11.4px;line-height:12px;color:#000;font-weight:bold;">Unacceptable</div><div class="t" style="left:812.00px;top:157.30px;font-family:'Liberation Serif',serif;font-size:11.4px;line-height:12px;color:#000;">c &lt;= 0.60*(D*t<sub>c</sub>)<sup>0.5</sup></div><div class="t" style="left:1110.50px;top:157.30px;font-family:'Liberation Serif',serif;font-size:11.4px;line-height:12px;color:#000;">Eqn 7.8</div><div class="t" style="left:812.00px;top:179.30px;font-family:'Liberation Serif',serif;font-size:11.4px;line-height:12px;color:#000;">2 &lt;= (0.60*(60*1)<sup>0.5</sup> = 4.6476)</div><div class="t" style="left:1110.50px;top:179.30px;font-family:'Liberation Serif',serif;font-size:11.4px;line-height:12px;color:#000;font-weight:bold;">Acceptable</div><div class="t" style="left:812.00px;top:220.00px;font-family:'Liberation Serif',serif;font-size:11.4px;line-height:12px;color:#000;">w<sub>H</sub> &lt;= min[t<sub>c</sub> / 3.0, 0.5]</div><div class="t" style="left:1110.50px;top:220.00px;font-family:'Liberation Serif',serif;font-size:11.4px;line-height:12px;color:#000;">Eqn 7.9</div><div class="t" style="left:812.00px;top:240.10px;font-family:'Liberation Serif',serif;font-size:11.4px;line-height:12px;color:#000;">0.1 &lt;= (min[1 / 3.0, 0.5] = 0.3333)</div><div class="t" style="left:1110.50px;top:240.10px;font-family:'Liberation Serif',serif;font-size:11.4px;line-height:12px;color:#000;font-weight:bold;">Acceptable</div><div class="t" style="left:812.00px;top:279.80px;font-family:'Liberation Serif',serif;font-size:11.4px;line-height:12px;color:#000;">t<sub>mm-ID</sub> &gt;= 0.2*t<sub>c</sub></div><div class="t" style="left:1110.50px;top:279.80px;font-family:'Liberation Serif',serif;font-size:11.4px;line-height:12px;color:#000;">Eqn 7.1</div><div class="t" style="left:812.00px;top:300.40px;font-family:'Liberation Serif',serif;font-size:11.4px;line-height:12px;color:#000;">0.375 &gt;= (0.2*1 = 0.2)</div><div class="t" style="left:1110.50px;top:300.40px;font-family:'Liberation Serif',serif;font-size:11.4px;line-height:12px;color:#000;font-weight:bold;">True</div><div class="t" style="left:812.00px;top:320.60px;font-family:'Liberation Serif',serif;font-size:11.4px;line-height:12px;color:#000;">t<sub>mm-OD</sub> &gt;= 0.2*t<sub>c</sub></div><div class="t" style="left:1110.50px;top:320.60px;font-family:'Liberation Serif',serif;font-size:11.4px;line-height:12px;color:#000;">Eqn 7.2</div><div class="t" style="left:812.00px;top:340.60px;font-family:'Liberation Serif',serif;font-size:11.4px;line-height:12px;color:#000;">0.5 &gt;= (0.2*1 = 0.2)</div><div class="t" style="left:1110.50px;top:340.60px;font-family:'Liberation Serif',serif;font-size:11.4px;line-height:12px;color:#000;font-weight:bold;">True</div><div class="t" style="left:812.00px;top:400.80px;font-family:'Liberation Serif',serif;font-size:11.4px;line-height:12px;color:#000;">L<sub>w</sub> &gt; max[2*t<sub>c</sub>, 1]</div><div class="t" style="left:1110.50px;top:400.80px;font-family:'Liberation Serif',serif;font-size:11.4px;line-height:12px;color:#000;">Eqn 7.10</div><div class="t" style="left:812.00px;top:421.00px;font-family:'Liberation Serif',serif;font-size:11.4px;line-height:12px;color:#000;">40 &gt; (max[2*1, 1] = 2)</div><div class="t" style="left:1110.50px;top:421.00px;font-family:'Liberation Serif',serif;font-size:11.4px;line-height:12px;color:#000;font-weight:bold;">Acceptable</div><div class="t" style="left:812.00px;top:462.80px;font-family:'Liberation Serif',serif;font-size:11.4px;line-height:12px;color:#000;">L<sub>msd</sub> &gt;= 1.8*(D*t<sub>c</sub>)<sup>0.5</sup></div><div class="t" style="left:1110.50px;top:462.80px;font-family:'Liberation Serif',serif;font-size:11.4px;line-height:12px;color:#000;">Eqn 7.11</div><div class="t" style="left:812.00px;top:484.80px;font-family:'Liberation Serif',serif;font-size:11.4px;line-height:12px;color:#000;">40 &gt;= (1.8*(60*1)<sup>0.5</sup> = 13.9427)</div><div class="t" style="left:1110.50px;top:484.80px;font-family:'Liberation Serif',serif;font-size:11.4px;line-height:12px;color:#000;font-weight:bold;">Acceptable</div><div class="t" style="left:812.00px;top:525.70px;font-family:'Liberation Serif',serif;font-size:11.4px;line-height:12px;color:#000;">Further HIC damage has been prevented</div><div class="t" style="left:1110.50px;top:525.70px;font-family:'Liberation Serif',serif;font-size:11.4px;line-height:12px;color:#000;">Yes</div><div class="t" style="left:812.00px;top:545.40px;font-family:'Liberation Serif',serif;font-size:11.4px;line-height:12px;color:#000;">Establishment of a barrier coating or overlay</div><div class="t" style="left:1110.50px;top:545.40px;font-family:'Liberation Serif',serif;font-size:11.4px;line-height:12px;color:#000;">Yes</div><div class="t" style="left:994.00px;top:199.80px;font-family:'Liberation Serif',serif;font-size:11.4px;line-height:12px;color:#000;font-weight:bold;transform:translateX(-50%) scaleX(1.0000);transform-origin:50% 0;">Through-Thickness Extent Check</div><div class="t" style="left:994.00px;top:260.40px;font-family:'Liberation Serif',serif;font-size:11.4px;line-height:12px;color:#000;font-weight:bold;transform:translateX(-50%) scaleX(1.0000);transform-origin:50% 0;">Surface Break Check</div><div class="t" style="left:812.00px;top:361.20px;font-family:'Liberation Serif',serif;font-size:11.4px;line-height:12px;color:#000;">The HIC is not considered surface breaking.</div><div class="t" style="left:994.00px;top:381.00px;font-family:'Liberation Serif',serif;font-size:11.4px;line-height:12px;color:#000;font-weight:bold;transform:translateX(-50%) scaleX(1.0000);transform-origin:50% 0;">Weld Distance Check</div><div class="t" style="left:994.00px;top:441.60px;font-family:'Liberation Serif',serif;font-size:11.4px;line-height:12px;color:#000;font-weight:bold;transform:translateX(-50%) scaleX(1.0000);transform-origin:50% 0;">Distance to Major Structural Discontinuity Check</div><div class="t" style="left:994.00px;top:506.00px;font-family:'Liberation Serif',serif;font-size:11.4px;line-height:12px;color:#000;font-weight:bold;transform:translateX(-50%) scaleX(1.0000);transform-origin:50% 0;">Level 1 HIC Damage Prevention</div><div class="t" style="left:812.00px;top:566.60px;font-family:'Liberation Serif',serif;font-size:11.4px;line-height:12px;color:#000;">Equipment has been moved or the process envirnoment has</div><div class="t" style="left:812.00px;top:580.30px;font-family:'Liberation Serif',serif;font-size:11.4px;line-height:12px;color:#000;">been changed</div><div class="t" style="left:1110.50px;top:573.50px;font-family:'Liberation Serif',serif;font-size:11.4px;line-height:12px;color:#000;">No</div><div class="t" style="left:812.00px;top:598.40px;font-family:'Liberation Serif',serif;font-size:11.4px;line-height:12px;color:#000;">This assessment does <b>not</b> pass the level 1 damage requirements.</div><div class="t" style="left:812.00px;top:612.10px;font-family:'Liberation Serif',serif;font-size:11.4px;line-height:12px;color:#000;">Please see the full report for the Level 2 results</div>
</body></html>
